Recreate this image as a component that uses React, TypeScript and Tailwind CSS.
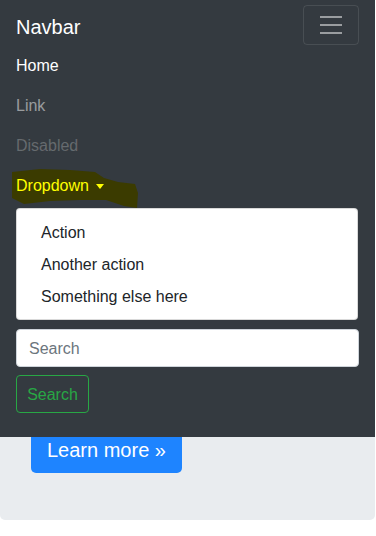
import React from "react";

export default function App() {
  const font = { fontFamily: '"Liberation Sans", Arial, sans-serif' };
  return (
    <div className="w-[375px] bg-white min-h-[536px]" style={font}>
      <nav className="relative z-10 bg-[#343a40] px-4 pt-[5px] pb-6">
        <div className="flex h-10 items-center justify-between">
          <a className="text-[20px] leading-[30px] text-white pt-[3px]">Navbar</a>
          <button className="flex h-[40px] w-14 items-center justify-center rounded-[4px] border border-[rgba(255,255,255,0.1)]">
            <svg width="30" height="30" viewBox="0 0 30 30">
              <path
                d="M4 7h22M4 15h22M4 23h22"
                stroke="rgba(255,255,255,0.5)"
                strokeWidth="2"
                strokeLinecap="butt"
              />
            </svg>
          </button>
        </div>
        <ul className="mt-[1px] flex flex-col text-[16px] leading-6">
          <li className="py-2 text-white">Home</li>
          <li className="py-2 text-[rgba(255,255,255,0.5)]">Link</li>
          <li className="py-2 text-[rgba(255,255,255,0.25)]">Disabled</li>
          <li className="relative py-2">
            <svg
              className="absolute -left-4 -top-[1px]"
              width="150"
              height="45"
              viewBox="0 0 150 45"
            >
              <path
                d="M12,7 L40,4 L70,5 L95,7 L104,13 L118,17 L135,19 L138,28 L137,43 L124,41 L106,35 L80,35 L50,36 L24,39 L12,33 Z"
                fill="#3b3b00"
              />
            </svg>
            <span className="relative flex items-center text-[#ffff00]">
              Dropdown
              <span className="ml-[7px] h-0 w-0 border-x-[4px] border-t-[5px] border-x-transparent border-t-[#ffff00]" />
            </span>
          </li>
        </ul>
        <div className="mt-[2px] mr-[1px] rounded-[4px] border border-[rgba(0,0,0,0.15)] bg-white pt-[8px] pb-[6px] text-[16px] leading-6 text-[#212529]">
          <div className="px-6 py-1">Action</div>
          <div className="px-6 py-1">Another action</div>
          <div className="px-6 py-1">Something else here</div>
        </div>
        <div className="mt-[9px] flex h-[38px] items-center rounded-[4px] border border-[#ced4da] bg-white px-3 pt-[2px] text-[16px] text-[#6c757d]">
          Search
        </div>
        <button className="mt-2 flex h-[38px] w-[73px] items-center justify-center rounded-[4px] border border-[#28a745] pt-[2px] text-[16px] text-[#28a745]">
          Search
        </button>
      </nav>
      <div className="-mt-3 rounded-b-[5px] bg-[#e9ecef] pl-[31px] pb-[47px]">
        <button className="flex h-12 items-center rounded-[5px] bg-[#1e84ff] px-4 pt-[2px] text-[20px] text-white">
          Learn more »
        </button>
      </div>
    </div>
  );
}
